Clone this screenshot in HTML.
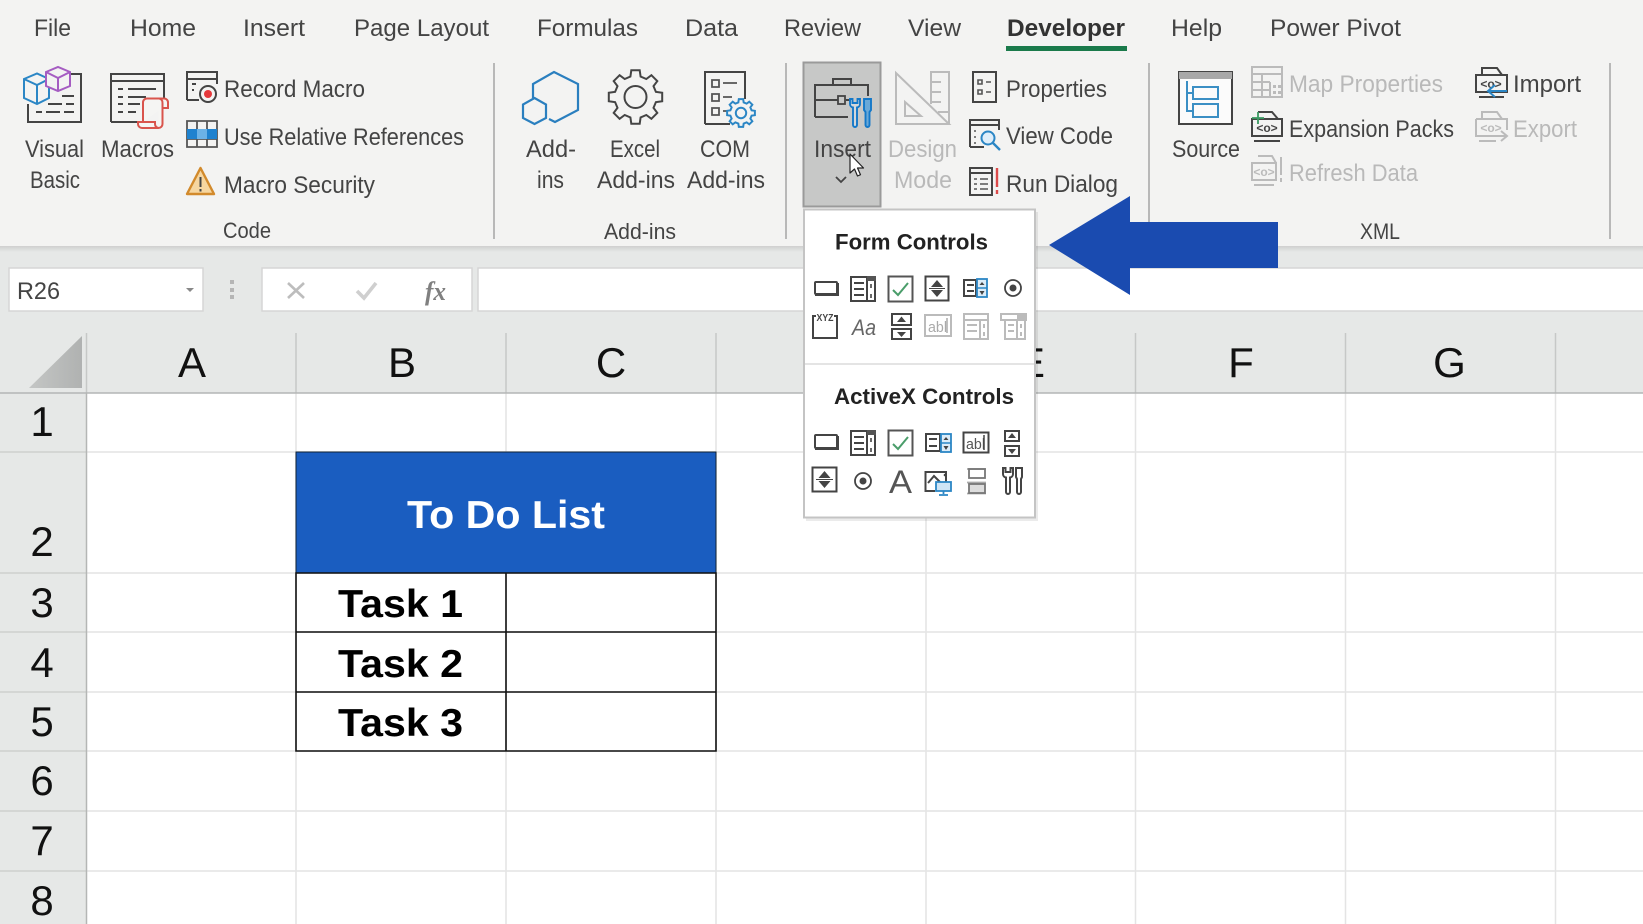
<!DOCTYPE html>
<html lang="en"><head><meta charset="utf-8"><title>Excel Developer Tab</title>
<style>
html,body{margin:0;padding:0;background:#fff;width:1643px;height:924px;overflow:hidden}
svg{display:block;filter:blur(.35px)}
text{font-family:"Liberation Sans",sans-serif;fill:#444;font-size:24px}
.g{fill:#b9b9b9}
.s{fill:none;stroke:#444;stroke-width:2}
.l{fill:none;stroke:#bbb;stroke-width:2}
.b{fill:none;stroke:#2b86c5;stroke-width:2}
</style></head><body>
<svg width="1643" height="924" viewBox="0 0 1643 924" xmlns="http://www.w3.org/2000/svg">
<defs><linearGradient id="sh" x1="0" y1="0" x2="0" y2="1"><stop offset="0" stop-color="#cfcfcf"/><stop offset="1" stop-color="#e6e8e7"/></linearGradient>
<linearGradient id="tri" x1="0" y1="0" x2="1" y2="0"><stop offset="0" stop-color="#c4c6c5"/><stop offset="1" stop-color="#b0b2b1"/></linearGradient></defs>

<rect width="1643" height="924" fill="#fff"/>
<rect width="1643" height="247" fill="#f3f3f2"/>
<rect y="247" width="1643" height="146" fill="#e6e8e7"/>
<rect y="246" width="1643" height="6" fill="url(#sh)"/>
<rect y="393" width="87" height="531" fill="#e6e8e7"/>

<!-- tabs -->
<text x="34" y="36" textLength="37" lengthAdjust="spacingAndGlyphs">File</text>
<text x="130" y="36" textLength="66" lengthAdjust="spacingAndGlyphs">Home</text>
<text x="243" y="36" textLength="62" lengthAdjust="spacingAndGlyphs">Insert</text>
<text x="354" y="36" textLength="135" lengthAdjust="spacingAndGlyphs">Page Layout</text>
<text x="537" y="36" textLength="101" lengthAdjust="spacingAndGlyphs">Formulas</text>
<text x="685" y="36" textLength="53" lengthAdjust="spacingAndGlyphs">Data</text>
<text x="784" y="36" textLength="77" lengthAdjust="spacingAndGlyphs">Review</text>
<text x="908" y="36" textLength="53" lengthAdjust="spacingAndGlyphs">View</text>
<text x="1007" y="36" textLength="118" lengthAdjust="spacingAndGlyphs" style="font-weight:700;fill:#333">Developer</text>
<rect x="1006" y="46" width="121" height="5" fill="#1a7a4b"/>
<text x="1171" y="36" textLength="51" lengthAdjust="spacingAndGlyphs">Help</text>
<text x="1270" y="36" textLength="131" lengthAdjust="spacingAndGlyphs">Power Pivot</text>

<!-- separators -->
<g stroke="#b8b8b8" stroke-width="2">
<line x1="494" y1="63" x2="494" y2="239"/><line x1="786" y1="63" x2="786" y2="239"/>
<line x1="1149" y1="63" x2="1149" y2="239"/><line x1="1610" y1="63" x2="1610" y2="239"/></g>

<!-- Code group labels -->
<text x="25" y="157" textLength="59" lengthAdjust="spacingAndGlyphs">Visual</text>
<text x="30" y="188" textLength="50" lengthAdjust="spacingAndGlyphs">Basic</text>
<text x="101" y="157" textLength="73" lengthAdjust="spacingAndGlyphs">Macros</text>
<text x="224" y="97" textLength="141" lengthAdjust="spacingAndGlyphs">Record Macro</text>
<text x="224" y="145" textLength="240" lengthAdjust="spacingAndGlyphs">Use Relative References</text>
<text x="224" y="193" textLength="151" lengthAdjust="spacingAndGlyphs">Macro Security</text>
<text x="223" y="238" textLength="48" lengthAdjust="spacingAndGlyphs" style="font-size:22px">Code</text>

<!-- Visual Basic icon -->
<path class="s" d="M70 74H81V122H28V104"/>
<path class="s" d="M62 96H74M48 104H62M66 104H74M36 112H42M46 112H60M64 112H74" stroke-width="1.6"/>
<path class="b" d="M24 79L37 73.5L49 79V98L37 104L24 98ZM24 79L37 85L49 79M37 85V104" style="fill:#f3f3f2"/>
<path d="M46 72L58 67L70 72V86L58 91L46 86ZM46 72L58 78L70 72M58 78V91" fill="#f3f3f2" stroke="#a55cc2" stroke-width="2"/>
<!-- Macros icon -->
<path class="s" d="M111 122V74H164V98M111 81H164M111 122H138"/>
<path class="s" stroke-width="1.6" d="M118 89H123M128 89H156M118 97H123M128 97H146M118 104H123M128 104H140M118 112H123M128 112H136"/>
<path d="M143 122V103a4 4 0 0 1 4-4.500H164a4 4 0 0 1 4 4.500v5h-5.500M159 98.500a4 4 0 0 1 3.500 4.500V124a4 4 0 0 1-4 4H142a4 4 0 0 1-4-4v-2H155v2a4 4 0 0 0 3.500 4" fill="#f5f5f3" stroke="#d9544c" stroke-width="2"/>
<!-- record -->
<path class="s" d="M187 100V72H217V84M187 79H217M187 100H199"/>
<path class="s" stroke-width="1.4" d="M192 84H196M192 90H194"/>
<circle cx="208" cy="94" r="8" fill="#f3f3f2" stroke="#444" stroke-width="2"/><circle cx="208" cy="94" r="4" fill="#e5383b"/>
<!-- relative -->
<path d="M187 121H217V147H187ZM197 121V147M207 121V147M187 139H217" fill="none" stroke="#555" stroke-width="1.8"/>
<rect x="187" y="129" width="10" height="10" fill="#1f82cf"/><rect x="207" y="129" width="10" height="10" fill="#1f82cf"/><rect x="197" y="129" width="10" height="10" fill="#6cb2e6"/>
<!-- warning -->
<path d="M187 194L200.500 168L214 194Z" fill="#f6d6a0" stroke="#d28a2c" stroke-width="2.400" stroke-linejoin="round"/>
<path d="M200.500 177V187M200.500 189V191.500" stroke="#444" stroke-width="2"/>

<!-- Add-ins -->
<path d="M533 98V84L554 72L578 84V110L555 122L549 119" fill="none" stroke="#2a7fbf" stroke-width="2.200"/>
<path d="M534.500 98L546 104.500V118L534.500 124L523 118V104.500Z" fill="none" stroke="#2a7fbf" stroke-width="2.200"/>
<text x="526" y="157" textLength="50" lengthAdjust="spacingAndGlyphs">Add-</text>
<text x="537" y="188" textLength="27" lengthAdjust="spacingAndGlyphs">ins</text>
<g transform="translate(635.500 97)"><path class="s" d="M-5.100 -20.400-4.200 -26.700 4.200 -26.700 5.100 -20.400 10.800 -18 15.900 -21.800 21.800 -15.900 18 -10.800 20.400 -5.100 26.700 -4.200 26.700 4.200 20.400 5.100 18 10.800 21.800 15.900 15.900 21.800 10.800 18 5.100 20.400 4.200 26.700-4.200 26.700-5.100 20.400-10.800 18-15.900 21.800-21.800 15.900-18 10.800-20.400 5.100-26.700 4.200-26.700 -4.200-20.400 -5.100-18 -10.800-21.800 -15.900-15.900 -21.800-10.800 -18Z"/><circle r="11" class="s"/></g>
<text x="610" y="157" textLength="50" lengthAdjust="spacingAndGlyphs">Excel</text>
<text x="597" y="188" textLength="78" lengthAdjust="spacingAndGlyphs">Add-ins</text>
<path class="s" d="M705 124V72H745V99M705 124H730"/>
<path d="M712 80h7v7h-7ZM712 94h7v7h-7ZM712 108h7v7h-7ZM723 83H737M723 97H732M723 111H729" fill="none" stroke="#555" stroke-width="1.800"/>
<g transform="translate(741 113) scale(.52)"><path d="M-5.100 -20.400-4.200 -26.700 4.200 -26.700 5.100 -20.400 10.800 -18 15.900 -21.800 21.800 -15.900 18 -10.800 20.400 -5.100 26.700 -4.200 26.700 4.200 20.400 5.100 18 10.800 21.800 15.900 15.900 21.800 10.800 18 5.100 20.400 4.200 26.700-4.200 26.700-5.100 20.400-10.800 18-15.900 21.800-21.800 15.900-18 10.800-20.400 5.100-26.700 4.200-26.700 -4.200-20.400 -5.100-18 -10.800-21.800 -15.900-15.900 -21.800-10.800 -18Z" fill="#f3f3f2" stroke="#2b86c5" stroke-width="3.800"/><circle r="10" fill="none" stroke="#2b86c5" stroke-width="3.800"/></g>
<text x="700" y="157" textLength="50" lengthAdjust="spacingAndGlyphs">COM</text>
<text x="687" y="188" textLength="78" lengthAdjust="spacingAndGlyphs">Add-ins</text>
<text x="604" y="239" textLength="72" lengthAdjust="spacingAndGlyphs" style="font-size:22px">Add-ins</text>

<!-- Insert button -->
<rect x="803.500" y="62.500" width="77" height="144" fill="#c7c8c7" stroke="#9a9a9a" stroke-width="2"/>
<path class="s" d="M815 117V85H868V96M815 117H848M815 100H838M846 100H850M833 85V79H851V85"/>
<rect x="838" y="96" width="7" height="8" fill="#c7c8c7" stroke="#444" stroke-width="1.800"/>
<path d="M850 99v5a3.500 3.500 0 0 0 3 3.500V125a2 2 0 0 0 4 0V107.500a3.500 3.500 0 0 0 3-3.500v-5l-2.500 0v4h-5v-4Z" fill="#d4d8db" stroke="#1478c8" stroke-width="1.900"/>
<path d="M864 99h7v11l-1.500 2V125a2 2 0 0 1-4 0V112l-1.500-2Z" fill="#6aa9d8" stroke="#1478c8" stroke-width="1.900"/>
<text x="814" y="157" textLength="57" lengthAdjust="spacingAndGlyphs">Insert</text>
<path d="M836 177L841 182L846 177" fill="none" stroke="#444" stroke-width="1.800"/>
<path d="M850 154v19l4.500-4 3 7 3-1.300-3-6.700h6Z" fill="#fff" stroke="#222" stroke-width="1.200" stroke-linejoin="round"/>

<!-- Design mode -->
<path class="l" d="M896 73V124H949ZM905 102V116H921ZM931 104V72H949V124M931 82H941M931 92H941M931 102H941M938 112H949"/>
<text x="888" y="157" textLength="69" lengthAdjust="spacingAndGlyphs" class="g">Design</text>
<text x="894" y="188" textLength="58" lengthAdjust="spacingAndGlyphs" class="g">Mode</text>
<!-- Properties -->
<rect x="973" y="72" width="23" height="30" class="s"/>
<path d="M978 80h4v4h-4ZM978 90h4v4h-4ZM986 82h5M986 92h5" fill="none" stroke="#555" stroke-width="1.600"/>
<text x="1006" y="97" textLength="101" lengthAdjust="spacingAndGlyphs">Properties</text>
<!-- View code -->
<path class="s" d="M970 147V120H999V130M970 125H999M970 147H984"/>
<path d="M974 131h2M974 137h2M974 143h2" stroke="#555" stroke-width="1.600"/>
<circle cx="988" cy="138" r="6.500" fill="#dfeefa" stroke="#2b86c5" stroke-width="2"/><path d="M993 143L1000 150" stroke="#2b86c5" stroke-width="2.400"/>
<text x="1006" y="144" textLength="107" lengthAdjust="spacingAndGlyphs">View Code</text>
<!-- Run dialog -->
<path class="s" d="M970 168H992V195H970ZM970 173H992"/>
<path d="M974 179h3M980 179h8M974 184h3M980 184h8M974 189h3M980 189h8" stroke="#555" stroke-width="1.500"/>
<path d="M997 168V187M997 190V194" stroke="#dc4a4a" stroke-width="2.400"/>
<text x="1006" y="192" textLength="112" lengthAdjust="spacingAndGlyphs">Run Dialog</text>

<!-- XML -->
<rect x="1179" y="72" width="53" height="52" fill="#fbfbfb" stroke="#444" stroke-width="2"/>
<rect x="1179" y="72" width="53" height="7" fill="#a8a8a8"/>
<path d="M1187 81V111H1193M1187 93H1193M1193 87H1218V99H1193ZM1193 104H1218V117H1193Z" fill="none" stroke="#3b8fc4" stroke-width="2"/>
<text x="1172" y="157" textLength="68" lengthAdjust="spacingAndGlyphs">Source</text>
<path class="l" d="M1252 67H1282V97H1252ZM1252 74H1282M1252 82H1270M1252 90H1270M1262 74V97M1270 82V97"/>
<path d="M1273 85h3v3h-3ZM1278 85h3v3h-3ZM1273 91h3v3h-3ZM1278 91h3v3h-3Z" fill="#bbb"/>
<text x="1289" y="92" textLength="154" lengthAdjust="spacingAndGlyphs" class="g">Map Properties</text>
<path class="s" d="M1258 112H1272L1278 119M1252 119H1282V136H1252ZM1254 141H1280"/>
<text x="1267" y="132" text-anchor="middle" style="font-size:12px;fill:#444;font-weight:700">&lt;o&gt;</text>
<path d="M1258 112V124M1252 118H1264" stroke="#3a9a62" stroke-width="1.800"/>
<text x="1289" y="137" textLength="165" lengthAdjust="spacingAndGlyphs">Expansion Packs</text>
<path class="l" d="M1258 156H1272L1276 163M1252 163H1276V180H1252ZM1254 185H1274M1281 157V175M1281 178V182"/>
<text x="1264" y="176" text-anchor="middle" style="font-size:12px;fill:#bbb;font-weight:700">&lt;o&gt;</text>
<text x="1289" y="181" textLength="129" lengthAdjust="spacingAndGlyphs" class="g">Refresh Data</text>
<path class="s" d="M1482 75V68H1497L1502 75M1476 75H1507V92H1476ZM1479 97H1504"/>
<text x="1491" y="88" text-anchor="middle" style="font-size:12px;fill:#444;font-weight:700">&lt;o&gt;</text>
<path d="M1507 91H1489M1495 85L1488 91L1495 97" fill="none" stroke="#2b86c5" stroke-width="2"/>
<text x="1513" y="92" textLength="68" lengthAdjust="spacingAndGlyphs">Import</text>
<path class="l" d="M1482 119V112H1497L1502 119M1476 119H1507V130M1476 119V136H1494M1479 141H1496M1490 136H1506M1501 131L1507 136L1501 141"/>
<text x="1491" y="132" text-anchor="middle" style="font-size:12px;fill:#bbb;font-weight:700">&lt;o&gt;</text>
<text x="1513" y="137" textLength="64" lengthAdjust="spacingAndGlyphs" class="g">Export</text>
<text x="1360" y="239" textLength="40" lengthAdjust="spacingAndGlyphs" style="font-size:22px">XML</text>

<!-- formula bar -->
<rect x="9" y="268" width="194" height="43" fill="#fff" stroke="#d6d6d6" stroke-width="1.500"/>
<text x="17" y="299" textLength="43" lengthAdjust="spacingAndGlyphs">R26</text>
<path d="M186 288H194L190 292Z" fill="#888"/>
<g fill="#b5b5b5"><rect x="230" y="280" width="4" height="4"/><rect x="230" y="288" width="4" height="4"/><rect x="230" y="295" width="4" height="4"/></g>
<rect x="262" y="268" width="210" height="43" fill="#fff" stroke="#d6d6d6" stroke-width="1.500"/>
<path d="M288 283L304 298M304 283L288 298" stroke="#bdbdbd" stroke-width="2.600"/>
<path d="M357 291L364 298L376 283" fill="none" stroke="#cfcfcf" stroke-width="3.600"/>
<text x="425" y="300" textLength="21" lengthAdjust="spacingAndGlyphs" style="font-family:'Liberation Serif',serif;font-style:italic;font-weight:700;font-size:26px;fill:#808080">fx</text>
<rect x="478" y="268" width="1167" height="43" fill="#fff" stroke="#d6d6d6" stroke-width="1.500"/>

<!-- corner + headers -->
<path d="M29 388L82 336V388Z" fill="url(#tri)"/>
<g stroke="#c6c8c7" stroke-width="1.500"><path d="M296 333V393M506 333V393M716 333V393M926 333V393M1135.500 333V393M1345.500 333V393M1555.500 333V393M86.500 333V393"/></g>
<text x="192" y="377" text-anchor="middle" style="font-size:42px;fill:#111">A</text>
<text x="402" y="377" text-anchor="middle" style="font-size:42px;fill:#111">B</text>
<text x="611" y="377" text-anchor="middle" style="font-size:42px;fill:#111">C</text>
<text x="1031" y="377" text-anchor="middle" style="font-size:42px;fill:#111">E</text>
<text x="1241" y="377" text-anchor="middle" style="font-size:42px;fill:#111">F</text>
<text x="1449.500" y="377" text-anchor="middle" style="font-size:42px;fill:#111">G</text>
<!-- grid -->
<g stroke="#e4e4e4" stroke-width="1.500"><path d="M296 393V924M506 393V924M716 393V924M926 393V924M1135.500 393V924M1345.500 393V924M1555.500 393V924M87 452H1643M87 573H1643M87 632H1643M87 692H1643M87 751H1643M87 811H1643M87 871H1643"/></g>
<g stroke="#cdcfce" stroke-width="1.500"><path d="M0 452H86M0 573H86M0 632H86M0 692H86M0 751H86M0 811H86M0 871H86"/></g>
<path d="M0 393H1643" stroke="#b4b6b5" stroke-width="1.500"/>
<path d="M86.500 393V924" stroke="#b4b6b5" stroke-width="1.500"/>
<text x="42" y="436" text-anchor="middle" style="font-size:42px;fill:#111">1</text>
<text x="42" y="556" text-anchor="middle" style="font-size:42px;fill:#111">2</text>
<text x="42" y="617" text-anchor="middle" style="font-size:42px;fill:#111">3</text>
<text x="42" y="677" text-anchor="middle" style="font-size:42px;fill:#111">4</text>
<text x="42" y="736" text-anchor="middle" style="font-size:42px;fill:#111">5</text>
<text x="42" y="795" text-anchor="middle" style="font-size:42px;fill:#111">6</text>
<text x="42" y="855" text-anchor="middle" style="font-size:42px;fill:#111">7</text>
<text x="42" y="915" text-anchor="middle" style="font-size:42px;fill:#111">8</text>
<!-- table -->
<rect x="296" y="452" width="420" height="121" fill="#1a5dc0" stroke="#123" stroke-width="1"/>
<text x="407" y="528" textLength="198" lengthAdjust="spacingAndGlyphs" style="font-size:39px;font-weight:700;fill:#fff">To Do List</text>
<path d="M296 573H716V751H296ZM296 632H716M296 692H716M506 573V751" fill="none" stroke="#111" stroke-width="1.600"/>
<text x="338" y="617" textLength="125" lengthAdjust="spacingAndGlyphs" style="font-size:39px;font-weight:700;fill:#000">Task 1</text>
<text x="338" y="677" textLength="125" lengthAdjust="spacingAndGlyphs" style="font-size:39px;font-weight:700;fill:#000">Task 2</text>
<text x="338" y="736" textLength="125" lengthAdjust="spacingAndGlyphs" style="font-size:39px;font-weight:700;fill:#000">Task 3</text>

<!-- arrow -->
<path d="M1049 245L1130 196V222H1278V268H1130V295Z" fill="#1a4bb0"/>

<!-- menu -->
<rect x="806" y="212" width="232" height="309" fill="#000" opacity=".08"/>
<rect x="804" y="209.500" width="231" height="308" fill="#fff" stroke="#c4c4c4" stroke-width="2"/>
<path d="M805 364H1034" stroke="#dcdcdc" stroke-width="1.500"/>
<text x="835" y="249.500" textLength="153" lengthAdjust="spacingAndGlyphs" style="font-size:22px;font-weight:700;fill:#222">Form Controls</text>
<text x="834" y="404" textLength="180" lengthAdjust="spacingAndGlyphs" style="font-size:22px;font-weight:700;fill:#222">ActiveX Controls</text>

<!-- Form row 1 -->
<rect x="815" y="282" width="22" height="12" rx="1" class="s"/><path d="M815 295H838V283" fill="none" stroke="#444" stroke-width="2"/>
<path class="s" d="M851 277H875V301H851ZM867 277V301M854 283H864M854 289H864M854 295H864" stroke-width="1.800"/>
<rect x="867" y="276" width="9" height="5" fill="#555"/>
<path d="M871 284V288M871 294V298" stroke="#444" stroke-width="1.600"/>
<rect x="888.500" y="276.500" width="24" height="25" fill="none" stroke="#555" stroke-width="2"/>
<path d="M893 290L898 295L908 283" fill="none" stroke="#4a9d6a" stroke-width="2"/>
<rect x="925.500" y="276.500" width="23" height="24" fill="none" stroke="#444" stroke-width="2"/>
<path d="M937 280L943 287H931ZM937 297L943 290H931Z" fill="#444"/><path d="M929 288.500H945" stroke="#444"/>
<path class="s" d="M964 280H976V296H964ZM967 285H974M967 291H974" stroke-width="1.800"/>
<rect x="977" y="279" width="10" height="18" fill="#dcecf8" stroke="#2b86c5" stroke-width="1.800"/><path d="M977 288H987" stroke="#2b86c5" stroke-width="1.500"/><path d="M982 282L979.500 285H984.500ZM982 295L979.500 291H984.500Z" fill="#444"/>
<circle cx="1013" cy="288" r="8" fill="none" stroke="#444" stroke-width="1.800"/><circle cx="1013" cy="288" r="3.500" fill="#444"/>
<!-- Form row 2 -->
<path class="s" d="M816 316H813V338H837V316H834" stroke-width="2"/>
<text x="825" y="321" text-anchor="middle" textLength="17" lengthAdjust="spacingAndGlyphs" style="font-size:10px;font-weight:700;fill:#444">XYZ</text>
<text x="852" y="335" textLength="24" lengthAdjust="spacingAndGlyphs" style="font-size:22px;font-style:italic;fill:#666">Aa</text>
<path class="s" d="M892 314H911V325H892ZM892 329H911V339H892Z" stroke-width="1.800"/>
<path d="M901.500 316.500L906 322H897ZM901.500 337L906 332H897Z" fill="#444"/>
<rect x="925" y="315" width="26" height="21" fill="none" stroke="#bbb" stroke-width="2"/>
<text x="928" y="332" textLength="19" lengthAdjust="spacingAndGlyphs" style="font-size:15px;fill:#aaa">abl</text>
<path d="M947 318V333" stroke="#aaa" stroke-width="1.500"/>
<path class="l" stroke-width="1.800" d="M964 314H988V339H964ZM964 320H988M980 320V339M967 325H977M967 331H977M984 324V328M984 332V336"/>
<path class="l" stroke-width="1.800" d="M1005 320H1025V339H1005ZM1001 314H1026V320H1001ZM1017 320V339M1008 325H1014M1008 331H1014M1021 324V328M1021 332V336"/>
<rect x="1017" y="314" width="9" height="6" fill="#bbb"/>

<!-- ActiveX row 1 -->
<rect x="815" y="435" width="22" height="13" rx="1" class="s"/><path d="M815 449H838V436" fill="none" stroke="#444" stroke-width="2"/>
<path class="s" d="M851 431H875V455H851ZM867 431V455M854 437H864M854 443H864M854 449H864" stroke-width="1.800"/>
<rect x="867" y="430" width="9" height="5" fill="#555"/>
<path d="M871 438V442M871 448V452" stroke="#444" stroke-width="1.600"/>
<rect x="888.500" y="430.500" width="24" height="25" fill="none" stroke="#555" stroke-width="2"/>
<path d="M893 444L898 449L908 437" fill="none" stroke="#4a9d6a" stroke-width="2"/>
<path class="s" d="M926 434H940V451H926ZM929 439H937M929 446H937" stroke-width="1.800"/>
<rect x="941" y="434" width="10" height="18" fill="#dcecf8" stroke="#2b86c5" stroke-width="1.800"/><path d="M941 443H951" stroke="#2b86c5" stroke-width="1.500"/><path d="M946 437L943.500 440H948.500ZM946 450L943.500 446H948.500Z" fill="#444"/>
<rect x="963.500" y="432.500" width="25" height="20" fill="none" stroke="#444" stroke-width="2"/>
<text x="966" y="449" textLength="19" lengthAdjust="spacingAndGlyphs" style="font-size:15px;fill:#555">abl</text>
<path d="M984 435V450" stroke="#444" stroke-width="1.500"/>
<path class="s" d="M1005 431H1019V441H1005ZM1005 446H1019V456H1005Z" stroke-width="1.800"/>
<path d="M1012 433L1016 438H1008ZM1012 454L1016 449H1008Z" fill="#444"/>
<!-- ActiveX row 2 -->
<rect x="812.500" y="467.500" width="24" height="24" fill="none" stroke="#444" stroke-width="2"/>
<path d="M824.500 471L830.500 478H818.500ZM824.500 488L830.500 481H818.500Z" fill="#444"/><path d="M816 479.500H833" stroke="#444"/>
<circle cx="863" cy="481" r="8" fill="none" stroke="#444" stroke-width="1.800"/><circle cx="863" cy="481" r="3.500" fill="#444"/>
<text x="889" y="493" textLength="23" lengthAdjust="spacingAndGlyphs" style="font-size:32px;fill:#555">A</text>
<path class="s" d="M946 482V472H925.500V491H935M928 483L934 476L940 482" stroke-width="1.800"/>
<rect x="936" y="482" width="15" height="9" fill="#cfe5f6" stroke="#2b86c5" stroke-width="1.800"/><path d="M943.500 491V494M939 495H948" stroke="#2b86c5" stroke-width="1.800"/>
<circle cx="945" cy="475" r="1.300" fill="#444"/>
<path d="M967 469H986M967 482.500H986M967 493.500H986" stroke="#aaa" stroke-width="1.800"/>
<rect x="969" y="469" width="16" height="9" fill="none" stroke="#777" stroke-width="1.800"/>
<rect x="969" y="484" width="16" height="9" fill="#ddd" stroke="#777" stroke-width="1.800"/>
<path class="s" d="M1003 468v6a3.500 3.500 0 0 0 3 3.500V492a2 2 0 0 0 4 0V477.500a3.500 3.500 0 0 0 3-3.500v-6l-2.500 0v4h-5v-4Z" stroke-width="1.800"/>
<path class="s" d="M1016 468h6v9l-1 2V492a2 2 0 0 1-4 0V479l-1-2Z" stroke-width="1.800"/>
</svg>
</body></html>
